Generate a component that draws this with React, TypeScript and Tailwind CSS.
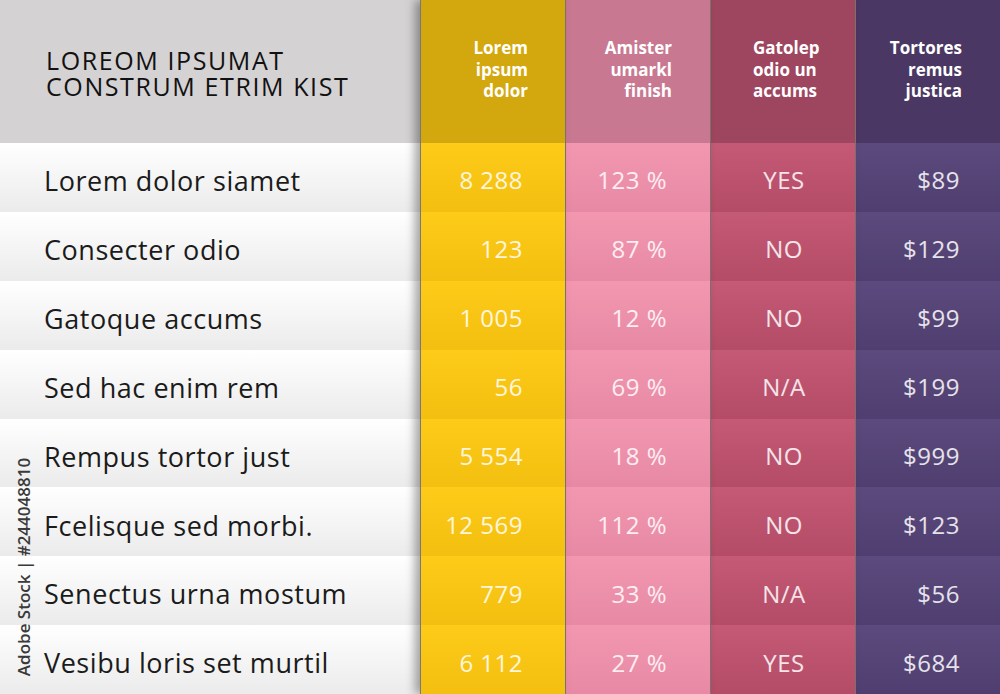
import React from "react";

const labels = [
  "Lorem dolor siamet",
  "Consecter odio",
  "Gatoque accums",
  "Sed hac enim rem",
  "Rempus tortor just",
  "Fcelisque sed morbi.",
  "Senectus urna mostum",
  "Vesibu loris set murtil",
];

const colA = ["8 288", "123", "1 005", "56", "5 554", "12 569", "779", "6 112"];
const colB = ["123 %", "87 %", "12 %", "69 %", "18 %", "112 %", "33 %", "27 %"];
const colC = ["YES", "NO", "NO", "N/A", "NO", "NO", "N/A", "YES"];
const colD = ["$89", "$129", "$99", "$199", "$999", "$123", "$56", "$684"];

const font = { fontFamily: "'Open Sans', Lato, sans-serif" };

export default function App() {
  return (
    <div className="relative flex h-[694px] w-[1000px] overflow-hidden bg-white" style={font}>
      {/* Left column */}
      <div className="flex w-[420px] flex-col">
        <div className="flex h-[143px] flex-col justify-center bg-[#d4d2d3] pl-[46px] pt-[2px]">
          <div className="text-[25px] leading-[26px] tracking-[1.6px] text-[#111]">
            LOREOM IPSUMAT
            <br />
            CONSTRUM ETRIM KIST
          </div>
        </div>
        <div className="flex flex-1 flex-col">
          {labels.map((l) => (
            <div
              key={l}
              className="flex flex-1 items-center bg-gradient-to-b from-[#ffffff] to-[#ebebeb] pl-[44px] pt-[8px]"
            >
              <span className="text-[27px] tracking-[0.55px] text-[#1b1b1b]">{l}</span>
            </div>
          ))}
        </div>
      </div>

      <Column
        z="z-[4]"
        head={["Lorem", "ipsum", "dolor"]}
        headAlign="items-end text-right pr-[37px]"
        headBg="bg-[#d3a80e]"
        cellFrom="from-[#fdcb18]"
        cellTo="to-[#f3bf10]"
        cellAlign="justify-end pr-[42px]"
        values={colA}
      />
      <Column
        z="z-[3]"
        head={["Amister", "umarkl", "finish"]}
        headAlign="items-end text-right pr-[38px]"
        headBg="bg-[#c87890]"
        cellFrom="from-[#f397b1]"
        cellTo="to-[#e789a4]"
        cellAlign="justify-end pr-[43px]"
        values={colB}
      />
      <Column
        z="z-[2]"
        head={["Gatolep", "odio un", "accums"]}
        headAlign="items-start text-left pl-[42px]"
        headBg="bg-[#9e4660]"
        cellFrom="from-[#c45a75]"
        cellTo="to-[#b44b67]"
        cellAlign="justify-center pl-[2px]"
        values={colC}
      />
      <Column
        z="z-[1]"
        head={["Tortores", "remus", "justica"]}
        headAlign="items-end text-right pr-[38px]"
        headBg="bg-[#4a3763]"
        cellFrom="from-[#5c4a7e]"
        cellTo="to-[#4f3e6f]"
        cellAlign="justify-end pr-[40px]"
        values={colD}
      />

      {/* side credit */}
      <div className="absolute left-[24px] top-[567px] -translate-x-1/2 -translate-y-1/2 -rotate-90 whitespace-nowrap text-[17px] font-semibold text-[#3a3a3a]">
        Adobe Stock | #244048810
      </div>
    </div>
  );
}

function Column({
  z,
  head,
  headAlign,
  headBg,
  cellFrom,
  cellTo,
  cellAlign,
  values,
}: {
  z: string;
  head: string[];
  headAlign: string;
  headBg: string;
  cellFrom: string;
  cellTo: string;
  cellAlign: string;
  values: string[];
}) {
  return (
    <div
      className={`relative ${z} flex w-[145px] flex-col border-l border-[#2a1a10]/60 shadow-[-5px_0_9px_rgba(0,0,0,0.35)]`}
    >
      <div className={`flex h-[143px] flex-col justify-center ${headAlign} ${headBg} pb-[4px]`}>
        {head.map((h) => (
          <div key={h} className="text-[17px] font-bold leading-[21.5px] text-white">
            {h}
          </div>
        ))}
      </div>
      <div className="flex flex-1 flex-col">
        {values.map((v, i) => (
          <div
            key={i}
            className={`flex flex-1 items-center bg-gradient-to-b ${cellFrom} ${cellTo} ${cellAlign} pt-[6px]`}
          >
            <span className="text-[24px] tracking-[0.5px] text-white/85">{v}</span>
          </div>
        ))}
      </div>
    </div>
  );
}
